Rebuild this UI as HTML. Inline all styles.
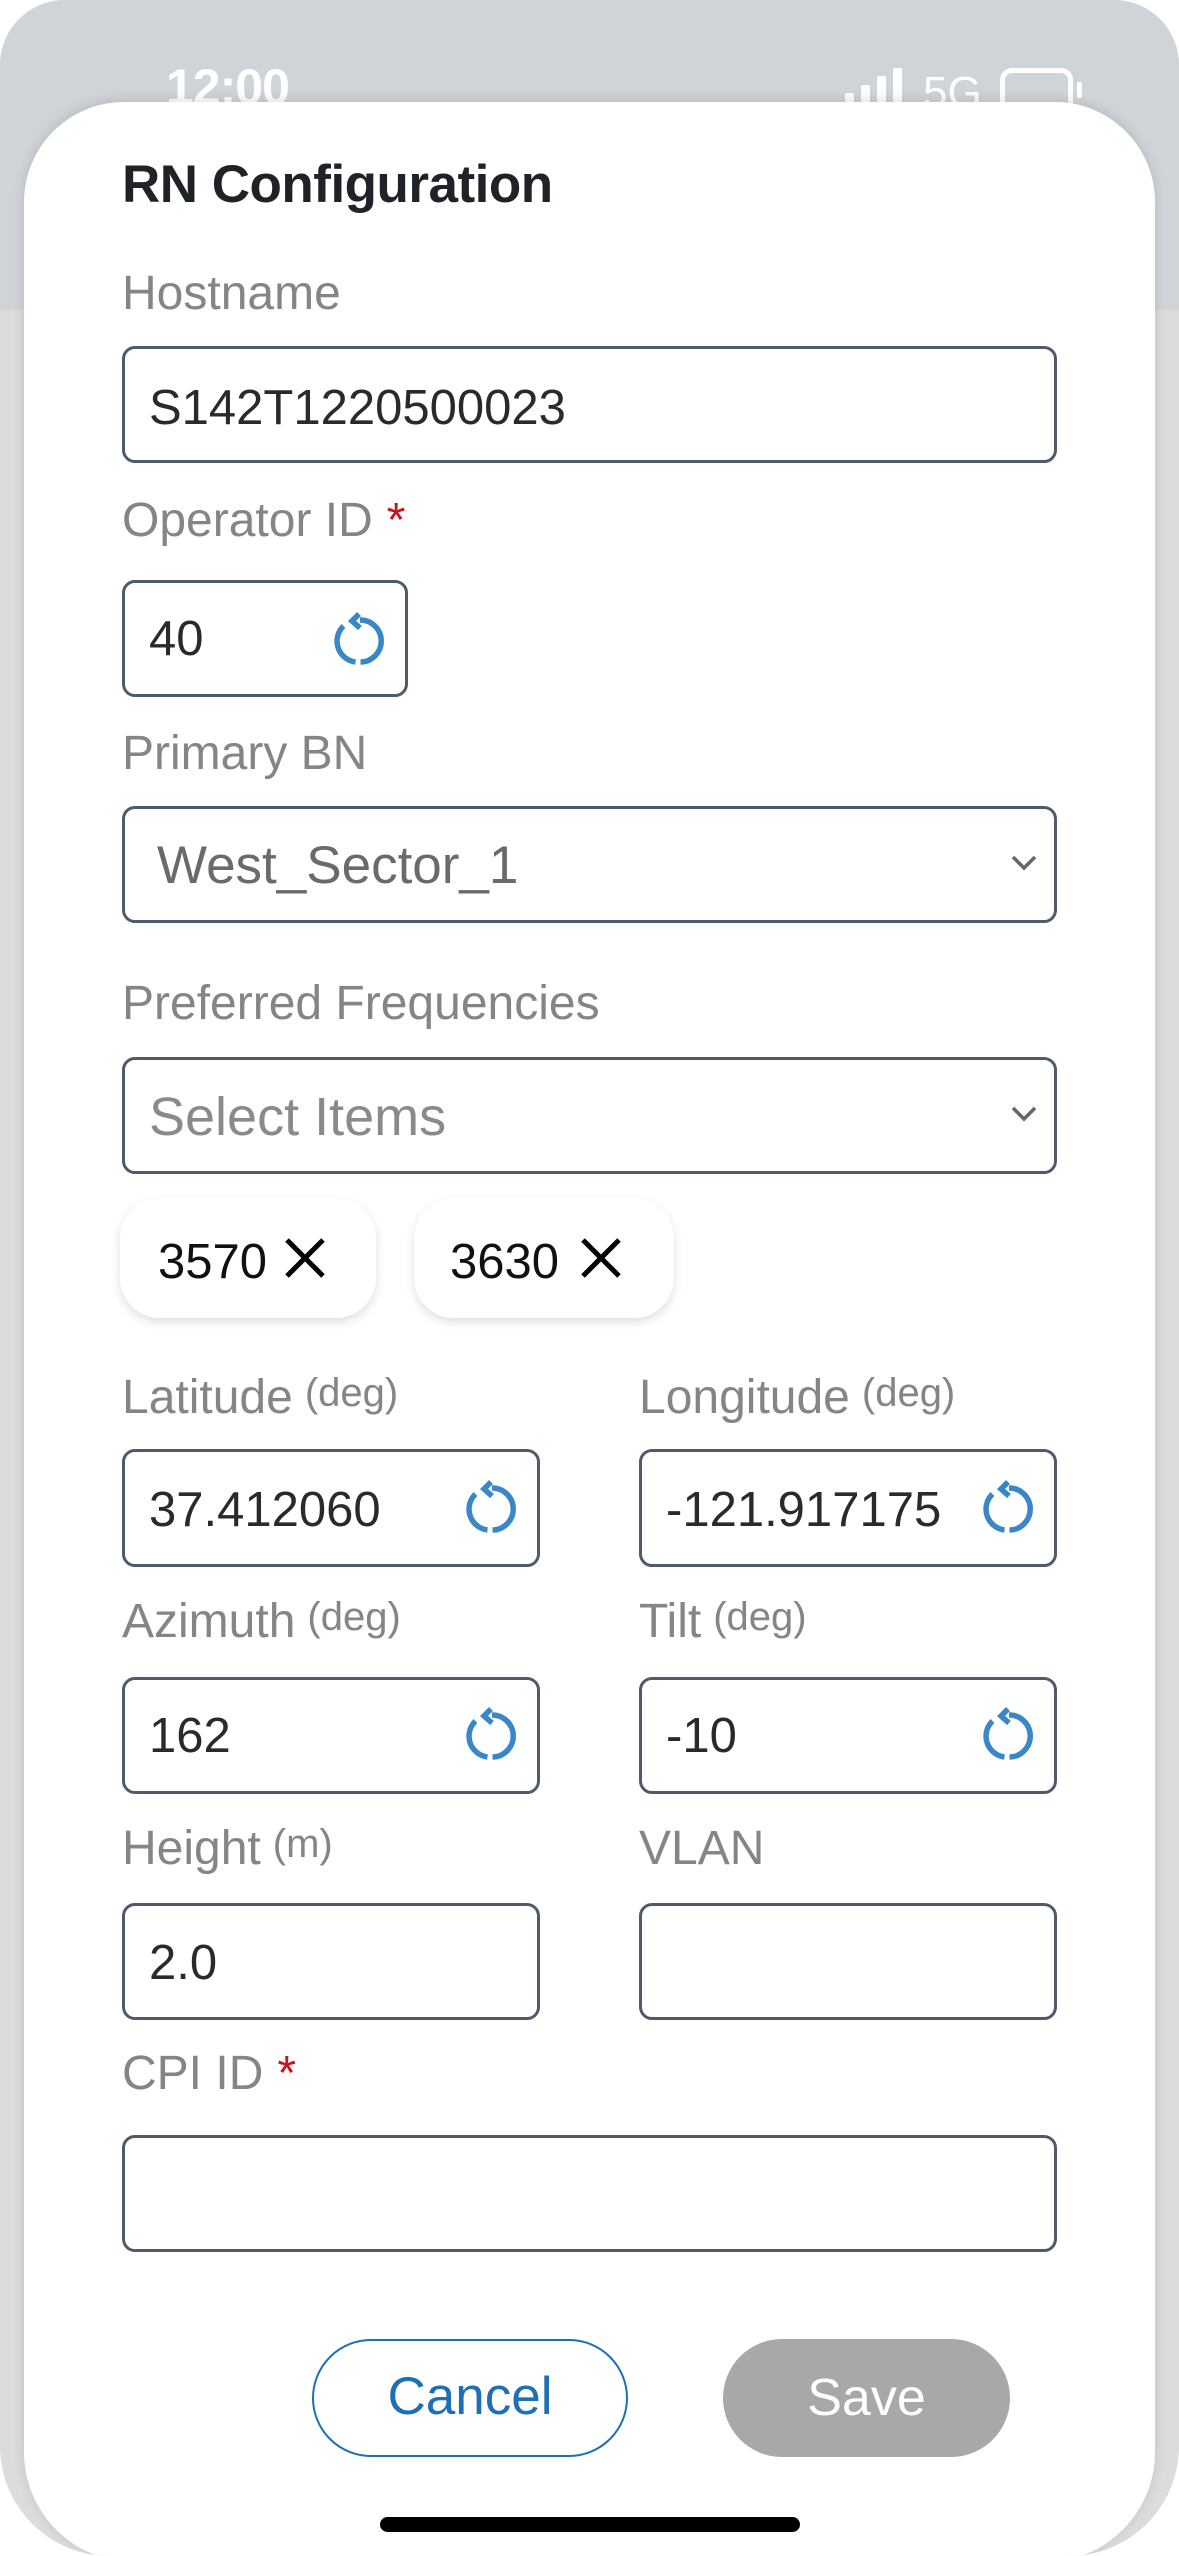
<!DOCTYPE html>
<html><head><meta charset="utf-8"><style>
*{margin:0;padding:0;box-sizing:border-box}
body{width:1179px;height:2556px;position:relative;overflow:hidden;background:#fff;font-family:"Liberation Sans",Arial,sans-serif}
.frame{position:absolute;left:0;top:0;width:1179px;height:2556px;background:#dcdcdc;border-radius:65px 65px 110px 110px;overflow:hidden}
.topgray{position:absolute;left:0;top:0;width:1179px;height:310px;background:#cfd4d8}
.sheet{position:absolute;left:24px;top:102px;width:1131px;height:2460px;background:#fff;border-radius:100px 100px 110px 110px;box-shadow:0 -2px 12px rgba(0,0,0,0.12)}
.a{position:absolute}
.lbl{position:absolute;color:#858585;font-size:48px;line-height:1;white-space:nowrap}
.lbl sup{font-size:40px;vertical-align:0;position:relative;top:-7px;margin-left:12px}
.star{color:#c4161c;margin-left:14px}
.inp{position:absolute;border:3px solid #4f5b6b;border-radius:13px;background:#fff}
.val{position:absolute;font-size:49px;color:#2a2a2a;line-height:1;white-space:nowrap}
.chip{position:absolute;background:#fff;border-radius:40px;box-shadow:0 4px 10px rgba(0,0,0,0.13);font-size:49px;color:#111}
.ref{position:absolute;width:48px;height:48px}
</style></head><body>
<div class="frame">
<div class="topgray"></div>
<div class="a" style="left:166px;top:58px;font-size:50px;color:#fff;font-weight:bold;letter-spacing:-1px">12:00</div>
<div class="a" style="left:845px;top:93px;width:9px;height:20px;background:#fff;border-radius:2px"></div>
<div class="a" style="left:861px;top:85px;width:9px;height:28px;background:#fff;border-radius:2px"></div>
<div class="a" style="left:877px;top:76px;width:9px;height:37px;background:#fff;border-radius:2px"></div>
<div class="a" style="left:893px;top:68px;width:9px;height:45px;background:#fff;border-radius:2px"></div>
<div class="a" style="left:923px;top:68px;font-size:44px;color:#fff">5G</div>
<div class="a" style="left:1000px;top:68px;width:73px;height:50px;border:5px solid #fff;border-radius:12px"></div>
<div class="a" style="left:1077px;top:82px;width:5px;height:16px;background:#fff;border-radius:2px"></div>
<div class="sheet"></div>

<div class="a" style="left:122px;top:154px;font-size:53px;font-weight:bold;color:#1f2328;letter-spacing:-0.5px">RN Configuration</div>

<div class="lbl" style="left:122px;top:270px">Hostname</div>
<div class="inp" style="left:122px;top:346px;width:935px;height:117px"></div>
<div class="val" style="left:149px;top:384px">S142T1220500023</div>

<div class="lbl" style="left:122px;top:497px">Operator ID<span class="star">*</span></div>
<div class="inp" style="left:122px;top:580px;width:286px;height:117px"></div>
<div class="val" style="left:149px;top:615px">40</div>

<div class="lbl" style="left:122px;top:730px">Primary BN</div>
<div class="inp" style="left:122px;top:806px;width:935px;height:117px"></div>
<div class="val" style="left:157px;top:839px;font-size:53px;color:#6a6a6a">West_Sector_1</div>

<div class="lbl" style="left:122px;top:980px">Preferred Frequencies</div>
<div class="inp" style="left:122px;top:1057px;width:935px;height:117px"></div>
<div class="val" style="left:149px;top:1090px;font-size:54px;color:#8a8a8a">Select Items</div>

<div class="chip" style="left:120px;top:1198px;width:256px;height:120px"><span class="a" style="left:38px;top:36px">3570</span></div>
<div class="chip" style="left:414px;top:1198px;width:260px;height:120px"><span class="a" style="left:36px;top:36px">3630</span></div>
<svg class="a" style="left:284px;top:1237px" width="42" height="42" viewBox="0 0 42 42"><path d="M3 3L39 39M39 3L3 39" stroke="#000" stroke-width="5"/></svg>
<svg class="a" style="left:580px;top:1237px" width="42" height="42" viewBox="0 0 42 42"><path d="M3 3L39 39M39 3L3 39" stroke="#000" stroke-width="5"/></svg>

<div class="lbl" style="left:122px;top:1374px">Latitude<sup>(deg)</sup></div>
<div class="lbl" style="left:639px;top:1374px">Longitude<sup>(deg)</sup></div>
<div class="inp" style="left:122px;top:1449px;width:418px;height:118px"></div>
<div class="inp" style="left:639px;top:1449px;width:418px;height:118px"></div>
<div class="val" style="left:149px;top:1486px">37.412060</div>
<div class="val" style="left:666px;top:1486px">-121.917175</div>

<div class="lbl" style="left:122px;top:1598px">Azimuth<sup>(deg)</sup></div>
<div class="lbl" style="left:639px;top:1598px">Tilt<sup>(deg)</sup></div>
<div class="inp" style="left:122px;top:1677px;width:418px;height:117px"></div>
<div class="inp" style="left:639px;top:1677px;width:418px;height:117px"></div>
<div class="val" style="left:149px;top:1712px">162</div>
<div class="val" style="left:666px;top:1712px">-10</div>

<div class="lbl" style="left:122px;top:1825px">Height<sup>(m)</sup></div>
<div class="lbl" style="left:639px;top:1825px">VLAN</div>
<div class="inp" style="left:122px;top:1903px;width:418px;height:117px"></div>
<div class="inp" style="left:639px;top:1903px;width:418px;height:117px"></div>
<div class="val" style="left:149px;top:1939px">2.0</div>

<div class="lbl" style="left:122px;top:2050px">CPI ID<span class="star">*</span></div>
<div class="inp" style="left:122px;top:2135px;width:935px;height:117px"></div>

<div class="a" style="left:312px;top:2339px;width:316px;height:118px;border:2.5px solid #1f6fb5;border-radius:59px;color:#1f6fb5;font-size:53px;text-align:center;line-height:112px">Cancel</div>
<div class="a" style="left:723px;top:2339px;width:287px;height:118px;background:#a7a8aa;border-radius:59px;color:#fff;font-size:52px;text-align:center;line-height:118px">Save</div>
<div class="a" style="left:380px;top:2517px;width:420px;height:15px;background:#000;border-radius:8px"></div>
</div>

<svg width="0" height="0" style="position:absolute"><defs>
<g id="r" fill="none" stroke="#3a87c8" stroke-width="5.5">
<path d="M26 3 A21 21 0 0 1 26.5 45"/>
<path d="M21.5 45 A21 21 0 0 1 9.5 9"/>
<path d="M25 -3 L18 4 L26 11" stroke-linejoin="miter"/>
</g></defs></svg>
<svg class="ref" style="left:334px;top:617px;overflow:visible" viewBox="0 0 48 48"><use href="#r"/></svg>
<svg class="ref" style="left:466px;top:1485px;overflow:visible" viewBox="0 0 48 48"><use href="#r"/></svg>
<svg class="ref" style="left:983px;top:1485px;overflow:visible" viewBox="0 0 48 48"><use href="#r"/></svg>
<svg class="ref" style="left:466px;top:1712px;overflow:visible" viewBox="0 0 48 48"><use href="#r"/></svg>
<svg class="ref" style="left:983px;top:1712px;overflow:visible" viewBox="0 0 48 48"><use href="#r"/></svg>
<svg class="a" style="left:1010px;top:853px" width="28" height="20" viewBox="0 0 28 20"><path d="M3 4L14 15L25 4" fill="none" stroke="#666" stroke-width="3.5"/></svg>
<svg class="a" style="left:1010px;top:1104px" width="28" height="20" viewBox="0 0 28 20"><path d="M3 4L14 15L25 4" fill="none" stroke="#666" stroke-width="3.5"/></svg>
</body></html>
